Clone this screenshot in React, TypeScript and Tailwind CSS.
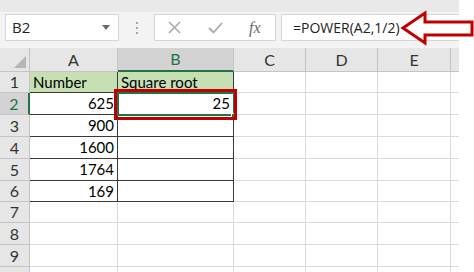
import React from "react";

const cellFont = { fontFamily: "Lato, 'Open Sans', sans-serif" };
const uiFont = { fontFamily: "'Open Sans', 'Noto Sans', sans-serif" };

const colW = [88, 116, 72, 72, 73];
const rowH = [21, 22, 22, 22, 22, 21, 21, 22, 22, 10];

type Cell = { t?: string; right?: boolean };
const data: Cell[][] = [
  [{ t: "Number" }, { t: "Square root" }],
  [{ t: "625", right: true }, { t: "25", right: true }],
  [{ t: "900", right: true }, {}],
  [{ t: "1600", right: true }, {}],
  [{ t: "1764", right: true }, {}],
  [{ t: "169", right: true }, {}],
];

export default function App() {
  return (
    <div className="relative w-[474px] h-[272px] bg-white overflow-hidden">
      <div className="w-[459px]">
        {/* toolbar */}
        <div className="h-[48px] bg-[#f3f3f3] flex flex-col">
          <div className="h-[12px] bg-[#e9e9e9]" />
          <div className="flex items-start pt-[2px]">
            <div className="ml-[5px] w-[114px] h-[27px] bg-white border border-[#d6d6d6] flex items-center justify-between pl-[6px] pr-[8px]">
              <span className="text-[15px] text-[#222]" style={uiFont}>B2</span>
              <svg width="8" height="5" viewBox="0 0 8 5"><path d="M0 0 L8 0 L4 5 Z" fill="#6b6b6b" /></svg>
            </div>
            <div className="w-[35px] h-[27px] flex flex-col items-center justify-center gap-[3px]">
              <div className="w-[2px] h-[2px] bg-[#a8a8a8]" />
              <div className="w-[2px] h-[2px] bg-[#a8a8a8]" />
              <div className="w-[2px] h-[2px] bg-[#a8a8a8]" />
            </div>
            <div className="w-[122px] h-[27px] bg-white border border-[#d6d6d6] flex items-center">
              <svg className="ml-[13px]" width="13" height="13" viewBox="0 0 13 13"><path d="M1 1 L12 12 M12 1 L1 12" stroke="#a9a9a9" strokeWidth="1.6" /></svg>
              <svg className="ml-[27px]" width="15" height="12" viewBox="0 0 15 12"><path d="M1 6 L5.5 10.5 L14 1" stroke="#a9a9a9" strokeWidth="1.8" fill="none" /></svg>
              <span className="ml-[26px] text-[16px] italic text-[#6a6a6a]" style={{ fontFamily: "'Liberation Serif', serif" }}>fx</span>
            </div>
            <div className="ml-[5px] flex-1 h-[27px] bg-white border border-[#d6d6d6] border-r-0 flex items-center pl-[11px]">
              <span className="text-[14px] text-[#222]" style={uiFont}>=POWER(A2,1/2)</span>
            </div>
          </div>
        </div>

        {/* column header row */}
        <div className="flex h-[24px]" style={cellFont}>
          <div className="relative w-[30px] h-full bg-[#e6e6e6] border-r border-b border-[#c4c4c4]">
            <svg className="absolute right-[3px] bottom-[3px]" width="12" height="12" viewBox="0 0 12 12"><path d="M12 0 L12 12 L0 12 Z" fill="#b5b5b5" /></svg>
          </div>
          {["A", "B", "C", "D", "E"].map((c, i) => (
            <div
              key={c}
              style={{ width: colW[i] }}
              className={
                "h-full flex items-center justify-center text-[16px] border-r border-[#c4c4c4] " +
                (i === 1
                  ? "bg-[#d3d3d3] text-[#217346] border-b-2 border-b-[#217346]"
                  : "bg-[#e6e6e6] text-[#333] border-b border-b-[#c4c4c4]")
              }
            >
              {c}
            </div>
          ))}
          <div className="flex-1 h-full bg-[#e6e6e6] border-b border-[#c4c4c4]" />
        </div>

        {/* rows */}
        {rowH.map((h, r) => {
          const row = data[r];
          const inTable = r < 6;
          return (
            <div key={r} className="flex overflow-hidden" style={{ height: h, ...cellFont }}>
              <div
                className={
                  "w-[30px] h-full flex items-center justify-center text-[16px] border-b border-[#c4c4c4] " +
                  (r === 1
                    ? "bg-[#d3d3d3] text-[#217346] border-r-2 border-r-[#217346]"
                    : "bg-[#e6e6e6] text-[#333] border-r border-r-[#c4c4c4]")
                }
              >
                {r < 9 ? r + 1 : ""}
              </div>
              {colW.map((w, c) => {
                const cell = inTable && c < 2 ? row[c] : undefined;
                const dark = inTable && c < 2;
                return (
                  <div
                    key={c}
                    style={{ width: w }}
                    className={
                      "h-full flex items-center px-[3px] text-[15px] text-black border-b border-r " +
                      (dark ? "border-b-[#3a3a3a] border-r-[#3a3a3a] " : "border-b-[#dadada] border-r-[#dadada] ") +
                      (r === 0 && c < 2 ? "bg-[#c6e0b4] " : "bg-white ") +
                      (cell?.right ? "justify-end" : "justify-start")
                    }
                  >
                    {cell?.t}
                  </div>
                );
              })}
              <div className="flex-1 h-full border-b border-[#dadada]" />
            </div>
          );
        })}
      </div>

      {/* active cell indicator */}
      <div className="absolute left-[117px] top-[92px] w-[118px] h-[24px] border-2 border-[#217346]" />
      <div className="absolute left-[231px] top-[113px] w-[5px] h-[5px] bg-[#217346] border border-white" />

      {/* red highlight rectangle */}
      <div className="absolute left-[114px] top-[89px] w-[123px] h-[31px] border-[3px] border-[#c00000]" />

      {/* red arrow */}
      <svg className="absolute left-[400px] top-[10px]" width="74" height="36" viewBox="0 0 74 36">
        <path d="M3 18 L25 3 L25 12 L72 12 L72 25 L25 25 L25 33 Z" fill="white" stroke="#c00000" strokeWidth="3" strokeLinejoin="miter" />
      </svg>
    </div>
  );
}
